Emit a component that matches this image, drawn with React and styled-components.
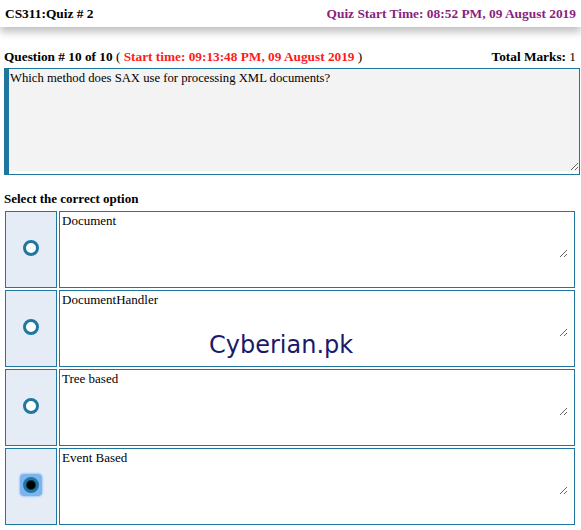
import styled, { createGlobalStyle } from "styled-components";

const GlobalStyle = createGlobalStyle`
  body {
    margin: 0;
    background: #fff;
    font-family: "Liberation Serif", "Times New Roman", serif;
    color: #000;
  }
`;

const Header = styled.div`
  height: 27px;
  padding: 0 5px 0 5px;
  display: flex;
  align-items: center;
  justify-content: space-between;
  background: #fff;
  box-shadow: 0 5px 8px rgba(0, 0, 0, 0.25);
  font-size: 13.4px;
  font-weight: bold;
  position: relative;
`;

const StartTime = styled.span`
  color: #8a1f7f;
`;

const Main = styled.div`
  padding: 22px 1px 0 4px;
`;

const QuestionLine = styled.div`
  display: flex;
  justify-content: space-between;
  align-items: center;
  font-size: 13.3px;
  font-weight: bold;
  height: 16px;
  margin-bottom: 3px;
  padding-right: 4px;
`;

const Red = styled.span`
  color: #ff1a1a;
`;

const Plain = styled.span`
  font-weight: normal;
`;

const QuestionBox = styled.div`
  border: 1px solid #1f77a0;
  border-left: 5px solid #1f77a0;
  background: #fff;
  height: 107px;
  padding-bottom: 2px;
  box-sizing: border-box;
`;

const Field = styled.textarea`
  display: block;
  box-sizing: border-box;
  border: none;
  outline: none;
  margin: 0;
  font-family: "Liberation Serif", "Times New Roman", serif;
  font-size: ${(p) => (p.$gray ? "12.7px" : "13px")};
  color: #000;
  padding: ${(p) => (p.$gray ? "2px 1px" : "1px 2px")};
  background: ${(p) => (p.$gray ? "#f3f3f3" : "#fff")};
  width: ${(p) => (p.$gray ? "100%" : "calc(100% - 6px)")};
  height: ${(p) => (p.$gray ? "102px" : "46px")};
  resize: both;
`;

const SelectTitle = styled.div`
  font-size: 13px;
  font-weight: bold;
  margin: 16px 0 4px 0;
`;

const Options = styled.div`
  position: relative;
  display: flex;
  flex-direction: column;
  gap: 2px;
  padding-right: 5px;
  padding-left: 1px;
`;

const Row = styled.div`
  display: flex;
  gap: 2px;
  height: 77px;
`;

const RadioCell = styled.div`
  width: 52px;
  flex: none;
  box-sizing: border-box;
  border: 1px solid #1f77a0;
  background: #e6ecf6;
  display: flex;
  align-items: center;
  justify-content: center;
  padding-bottom: 3px;
`;

const TextCell = styled.div`
  flex: 1;
  box-sizing: border-box;
  border: 1px solid #1f77a0;
  background: #fff;
`;

const Focus = styled.span`
  display: flex;
  align-items: center;
  justify-content: center;
  width: 22px;
  height: 22px;
  border-radius: 4px;
  background: ${(p) => (p.$on ? "#7db4f0" : "transparent")};
  box-shadow: ${(p) => (p.$on ? "0 0 2px 1px #a9cdf5" : "none")};
`;

const Radio = styled.span`
  width: 16px;
  height: 16px;
  box-sizing: border-box;
  border-radius: 50%;
  border: 3px solid #1f77a0;
  background: ${(p) => (p.$on ? "#000" : "#fff")};
  box-shadow: ${(p) => (p.$on ? "inset 0 0 0 1px #0c3850" : "none")};
`;

const Watermark = styled.div`
  position: absolute;
  left: 205px;
  top: 120px;
  font-family: "DejaVu Sans", Verdana, sans-serif;
  font-size: 24px;
  color: #1a1a6a;
  pointer-events: none;
`;

const options = ["Document", "DocumentHandler", "Tree based", "Event Based"];

const App = () => {
  return (
    <>
      <GlobalStyle />
      <Header>
        <span>CS311:Quiz # 2</span>
        <StartTime>Quiz Start Time: 08:52 PM, 09 August 2019</StartTime>
      </Header>
      <Main>
        <QuestionLine>
          <span>
            Question # 10 of 10 <Plain>(</Plain>{" "}
            <Red>Start time: 09:13:48 PM, 09 August 2019</Red> <Plain>)</Plain>
          </span>
          <span>
            Total Marks: <Plain>1</Plain>
          </span>
        </QuestionLine>
        <QuestionBox>
          <Field
            $gray
            readOnly
            value="Which method does SAX use for processing XML documents?"
          />
        </QuestionBox>
        <SelectTitle>Select the correct option</SelectTitle>
        <Options>
          {options.map((text, i) => (
            <Row key={text}>
              <RadioCell>
                <Focus $on={i === 3}>
                  <Radio $on={i === 3} />
                </Focus>
              </RadioCell>
              <TextCell>
                <Field readOnly value={text} />
              </TextCell>
            </Row>
          ))}
          <Watermark>Cyberian.pk</Watermark>
        </Options>
      </Main>
    </>
  );
};

export default App;
